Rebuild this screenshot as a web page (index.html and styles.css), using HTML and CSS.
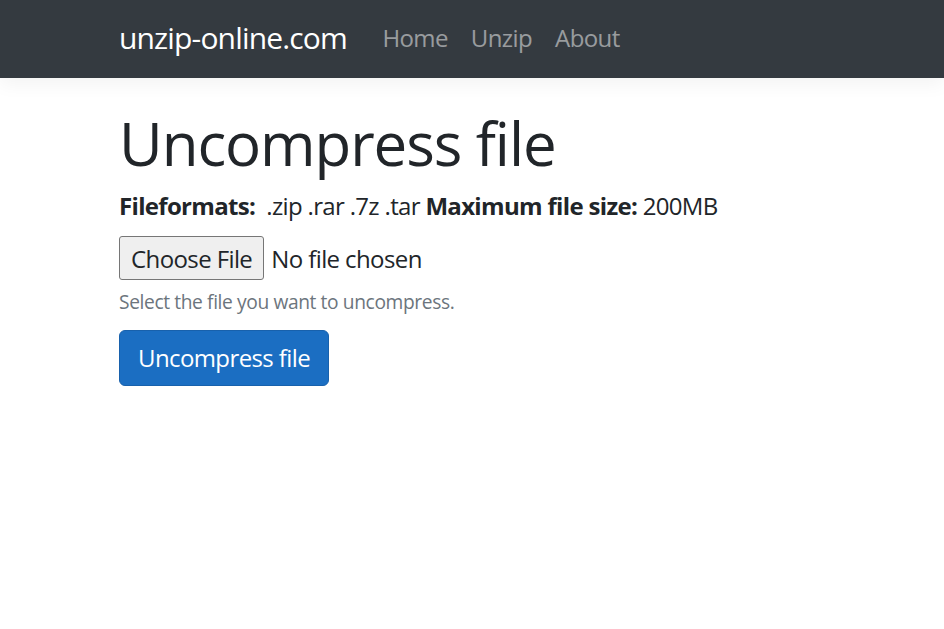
FILE: index.html
```html
<!DOCTYPE html>
<html lang="en">
<head>
<meta charset="utf-8">
<title>Uncompress file - unzip-online.com</title>
<link rel="stylesheet" href="styles.css">
</head>
<body>
<header class="navbar">
  <div class="container nav-inner">
    <a class="brand" href="#">unzip-online.com</a>
    <nav class="nav-links">
      <a href="#">Home</a>
      <a href="#">Unzip</a>
      <a href="#">About</a>
    </nav>
  </div>
</header>
<main class="container">
  <h1 class="title">Uncompress file</h1>
  <form class="upload-form">
    <p class="formats"><strong>Fileformats:</strong>&nbsp; .zip .rar .7z .tar <strong>Maximum file size:</strong> 200MB</p>
    <div class="file-row">
      <span class="file-btn">Choose File</span>
      <span class="file-name">No file chosen</span>
    </div>
    <small class="help">Select the file you want to uncompress.</small>
    <button type="button" class="btn-primary">Uncompress file</button>
  </form>
</main>
</body>
</html>
```
FILE: styles.css
```css
* { box-sizing: border-box; }
html, body { margin: 0; padding: 0; }
body {
  font-family: "Open Sans", "Noto Sans", sans-serif;
  color: #212529;
  background: #fff;
  font-size: 24px;
  letter-spacing: -0.025em;
}
.container {
  width: 706px;
  margin: 0 auto;
}
.navbar {
  background: #343a40;
  height: 78px;
  box-shadow: 0 6px 18px rgba(0, 0, 0, 0.05);
}
.nav-inner {
  height: 100%;
  display: flex;
  align-items: center;
  padding-bottom: 3px;
}
.brand {
  color: #fff;
  text-decoration: none;
  font-size: 30px;
  letter-spacing: -0.028em;
  margin-right: 24px;
}
.nav-links {
  display: flex;
}
.nav-links a {
  color: rgba(255, 255, 255, 0.5);
  text-decoration: none;
  padding: 0 11.5px;
  font-size: 24px;
}
.title {
  font-size: 60px;
  font-weight: 500;
  line-height: 72px;
  letter-spacing: -0.018em;
  margin: 29px 0 9px;
}
.formats {
  margin: 0 0 12px;
  line-height: 36px;
  letter-spacing: -0.028em;
}
.formats strong { font-weight: 700; }
.file-row {
  display: flex;
  align-items: center;
  height: 44px;
}
.file-btn {
  height: 44px;
  padding: 0 11px;
  display: flex;
  align-items: center;
  background: #efefef;
  border: 1px solid #767676;
  border-radius: 3px;
  margin-right: 7px;
}
.help {
  display: block;
  color: #6c757d;
  font-size: 19.2px;
  letter-spacing: -0.02em;
  line-height: 28px;
  margin: 8px 0 14px;
}
.btn-primary {
  font-family: inherit;
  font-size: 24px;
  letter-spacing: -0.025em;
  line-height: 36px;
  color: #fff;
  background: #1b6ec2;
  border: 1px solid #1861ac;
  border-radius: 6px;
  padding: 9px 18px;
}
```
